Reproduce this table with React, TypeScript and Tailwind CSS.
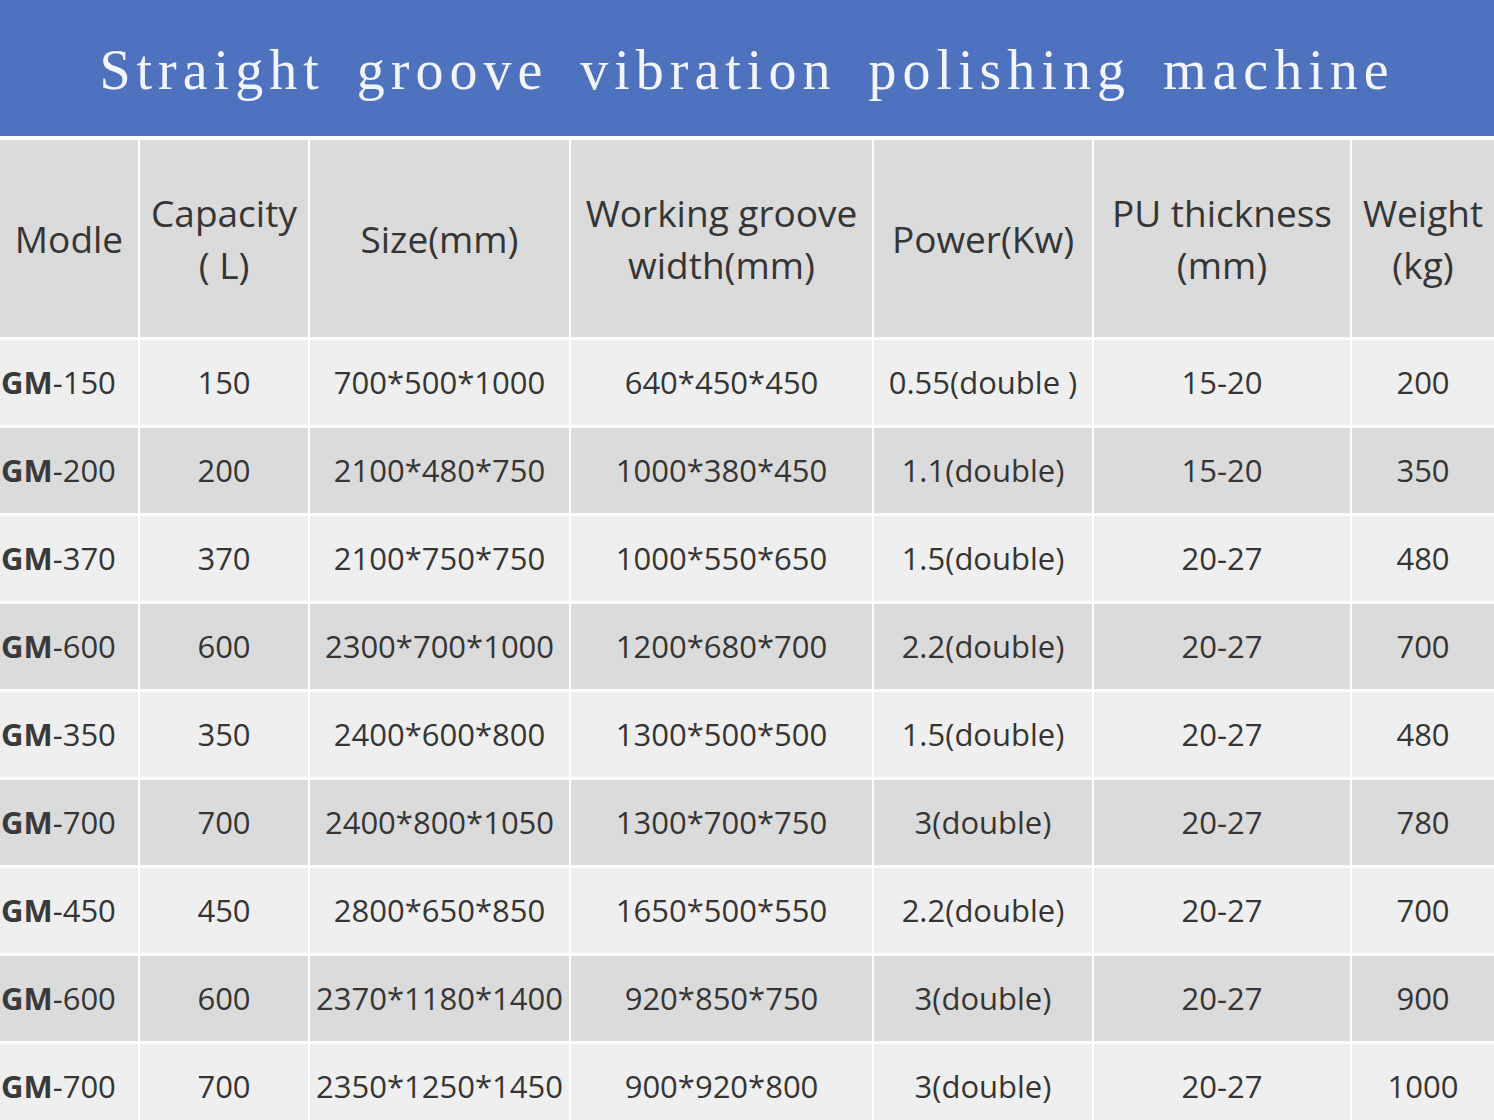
const rows = [
  ['150', '150', '700*500*1000', '640*450*450', '0.55(double )', '15-20', '200'],
  ['200', '200', '2100*480*750', '1000*380*450', '1.1(double)', '15-20', '350'],
  ['370', '370', '2100*750*750', '1000*550*650', '1.5(double)', '20-27', '480'],
  ['600', '600', '2300*700*1000', '1200*680*700', '2.2(double)', '20-27', '700'],
  ['350', '350', '2400*600*800', '1300*500*500', '1.5(double)', '20-27', '480'],
  ['700', '700', '2400*800*1050', '1300*700*750', '3(double)', '20-27', '780'],
  ['450', '450', '2800*650*850', '1650*500*550', '2.2(double)', '20-27', '700'],
  ['600', '600', '2370*1180*1400', '920*850*750', '3(double)', '20-27', '900'],
  ['700', '700', '2350*1250*1450', '900*920*800', '3(double)', '20-27', '1000'],
];

const headers = [
  ['Modle'],
  ['Capacity', '( L)'],
  ['Size(mm)'],
  ['Working groove', 'width(mm)'],
  ['Power(Kw)'],
  ['PU thickness', '(mm)'],
  ['Weight', '(kg)'],
];

export default function App() {
  return (
    <div className="h-[1120px] w-[1494px] overflow-hidden bg-white font-['Open_Sans','Noto_Sans',sans-serif] text-[#353535]">
      <div className="flex h-[136px] items-center justify-center bg-[#4f72bf] pt-[4px]">
        <h1 className="font-['Liberation_Serif',serif] text-[56px] leading-none tracking-[6px] [word-spacing:12px] text-[#f2f5fc]">
          Straight groove vibration polishing machine
        </h1>
      </div>
      <div className="mt-[4px] grid grid-cols-[138px_168px_259px_301px_218px_256px_1fr] gap-[2px] bg-white">
        {headers.map((h, i) => (
          <div
            key={i}
            className="flex h-[197px] flex-col items-center justify-center bg-[#dbdbdb] text-[37px] leading-[52px] whitespace-nowrap"
          >
            {h.map((line) => (
              <span key={line}>{line}</span>
            ))}
          </div>
        ))}
        {rows.map((r, ri) => {
          const bg = ri % 2 === 0 ? 'bg-[#efefef]' : 'bg-[#dbdbdb]';
          return r.map((cell, ci) =>
            ci === 0 ? (
              <div key={`${ri}-${ci}`} className={`mt-px flex h-[85px] items-center pl-[1px] text-[31px] ${bg}`}>
                <span className="font-bold text-[#3a3a3a]">GM</span>
                <span>-{cell}</span>
              </div>
            ) : (
              <div
                key={`${ri}-${ci}`}
                className={`mt-px flex h-[85px] items-center justify-center text-[31px] whitespace-nowrap ${bg}`}
              >
                {cell}
              </div>
            ),
          );
        })}
      </div>
    </div>
  );
}
